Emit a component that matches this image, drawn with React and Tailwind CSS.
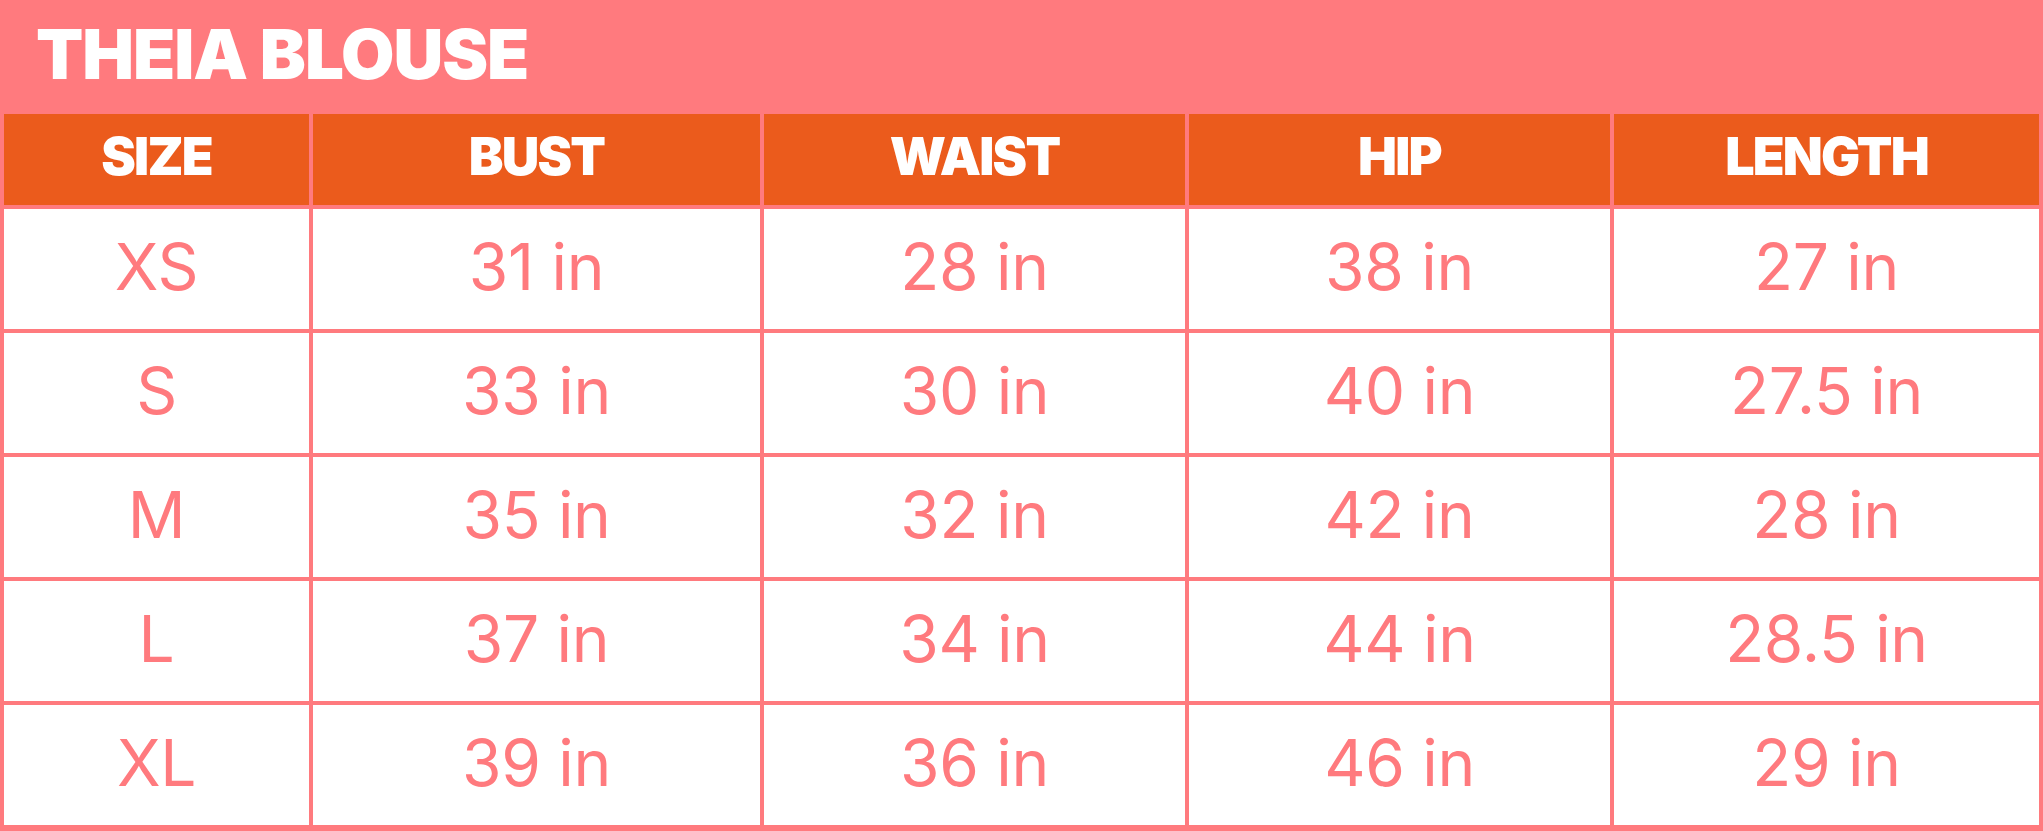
import React from "react";

const columns = ["SIZE", "BUST", "WAIST", "HIP", "LENGTH"];

const rows = [
  ["XS", "31 in", "28 in", "38 in", "27 in"],
  ["S", "33 in", "30 in", "40 in", "27.5 in"],
  ["M", "35 in", "32 in", "42 in", "28 in"],
  ["L", "37 in", "34 in", "44 in", "28.5 in"],
  ["XL", "39 in", "36 in", "46 in", "29 in"],
];

const App = () => {
  return (
    <div
      className="w-[2043px] h-[831px] bg-[#ff7a7e] p-[4px] flex flex-col"
      style={{ fontFamily: "Inter, 'Liberation Sans', sans-serif" }}
    >
      <div className="h-[110px] flex items-center pl-[32px] pb-[10px]">
        <h1 className="text-white font-black text-[69px] leading-none tracking-[-0.015em]">
          THEIA BLOUSE
        </h1>
      </div>
      <div className="grid grid-cols-[305px_447px_421px_421px_1fr] grid-rows-[91px_repeat(5,120px)] gap-[4px]">
        {columns.map((col) => (
          <div
            key={col}
            className="bg-[#eb5b1c] flex items-center justify-center pb-[6px] text-white font-black text-[52px] leading-none tracking-[-0.035em]"
          >
            {col}
          </div>
        ))}
        {rows.map((row) =>
          row.map((cell, i) => (
            <div
              key={row[0] + i}
              className="bg-white flex items-center justify-center pb-[4px] text-[#ff7a7e] text-[64px] leading-none tracking-[-0.005em]"
            >
              {cell}
            </div>
          ))
        )}
      </div>
    </div>
  );
};

export default App;
